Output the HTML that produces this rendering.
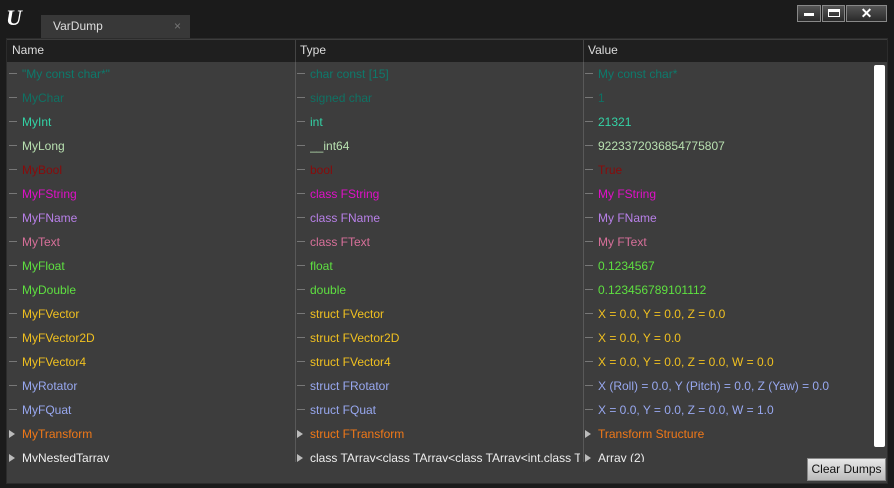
<!DOCTYPE html><html><head><style>
body{margin:0;width:894px;height:488px;background:#1b1b1b;overflow:hidden;font-family:"Liberation Sans",sans-serif;font-size:12px;position:relative}
.abs{position:absolute}
#panel{left:6px;top:38px;width:882px;height:446px;background:#3d3d3d;border:1px solid #2c2c2c;box-sizing:border-box;overflow:hidden}
#hdr{left:0;top:1px;width:882px;height:22px;background:#1f1f1f;color:#ddd}
#rows{position:absolute;left:0;top:0;width:882px;height:423px;overflow:hidden}
.row{position:absolute;left:0;height:24px;width:870px}
.c{position:absolute;top:0;line-height:24px;white-space:nowrap;overflow:hidden}
.t{position:absolute;top:11px;width:8px;height:1px;background:#777}
.ar{position:absolute;top:8px;width:0;height:0;border-left:6px solid #bbb;border-top:4px solid transparent;border-bottom:4px solid transparent}
.sep{position:absolute;top:23px;width:1px;height:400px;background:#595959}
.btn{position:absolute;top:5px;height:17px;background:linear-gradient(#555,#2a2a2a);border:1px solid #888;box-sizing:border-box;color:#fff;text-align:center;font-weight:bold;line-height:14px;font-size:14px}
</style></head><body>
<div class="abs" style="left:6px;top:5px;color:#fff;font:bold italic 22px 'Liberation Serif',serif">U</div>
<div class="abs" style="left:41px;top:15px;width:149px;height:24px;background:#383838;color:#ddd;line-height:22px"><span style="margin-left:12px">VarDump</span><span style="position:absolute;left:133px;color:#777">×</span></div>
<div class="btn" style="left:797px;width:24px"><div style="margin:7px auto;width:10px;height:3px;background:#fff"></div></div>
<div class="btn" style="left:822px;width:23px"><div style="margin:3px auto;width:12px;height:8px;border:1px solid #fff;border-top-width:3px;box-sizing:border-box"></div></div>
<div class="btn" style="left:846px;width:41px">✕</div>
<div id="panel" class="abs">
<div id="hdr" class="abs"><span class="abs" style="left:5px;top:3px">Name</span><span class="abs" style="left:293px;top:3px">Type</span><span class="abs" style="left:581px;top:3px">Value</span>
<div class="abs" style="left:288px;top:0;width:1px;height:22px;background:#444"></div><div class="abs" style="left:576px;top:0;width:1px;height:22px;background:#444"></div></div>
<div class="sep" style="left:288px"></div><div class="sep" style="left:576px"></div>
<div class="abs" style="left:867px;top:26px;width:11px;height:382px;background:#fff;border-radius:2px"></div>
<div id="rows"></div>
<div class="abs" style="left:800px;top:419px;width:79px;height:23px;background:linear-gradient(#e8e8e8,#bbb);border:1px solid #888;box-sizing:border-box;color:#111;text-align:center;line-height:21px">Clear Dumps</div>
</div>
<script>
var d=[["\"My const char*\"","char const [15]","My const char*","#0d7a6c"],["MyChar","signed char","1","#0f7264"],["MyInt","int","21321","#33d3a6"],["MyLong","__int64","9223372036854775807","#b8e0b0"],["MyBool","bool","True","#8a0a0a"],["MyFString","class FString","My FString","#e010c8"],["MyFName","class FName","My FName","#b880e8"],["MyText","class FText","My FText","#d8709a"],["MyFloat","float","0.1234567","#5ee040"],["MyDouble","double","0.123456789101112","#5ee040"],["MyFVector","struct FVector","X = 0.0, Y = 0.0, Z = 0.0","#f0c020"],["MyFVector2D","struct FVector2D","X = 0.0, Y = 0.0","#f0c020"],["MyFVector4","struct FVector4","X = 0.0, Y = 0.0, Z = 0.0, W = 0.0","#f0c020"],["MyRotator","struct FRotator","X (Roll) = 0.0, Y (Pitch) = 0.0, Z (Yaw) = 0.0","#98a8f0"],["MyFQuat","struct FQuat","X = 0.0, Y = 0.0, Z = 0.0, W = 1.0","#98a8f0"],["MyTransform","struct FTransform","Transform Structure","#f07818",1],["MyNestedTarray","class TArray<class TArray<class TArray<int,class TSizedDefaultAllocator<32> >","Array (2)","#eeeeee",1]];
var h="";d.forEach(function(r,i){var y=23+i*24;h+='<div class="row" style="top:'+y+'px;color:'+r[3]+'">';[0,288,576].forEach(function(x,j){h+=(r[4]?'<div class="ar" style="left:'+(x+2)+'px"></div>':'<div class="t" style="left:'+(x+2)+'px"></div>')+'<div class="c" style="left:'+(x+15)+'px;width:'+(j==1?270:260)+'px">'+r[j].replace(/</g,'&lt;')+'</div>'});h+='</div>'});
document.getElementById('rows').innerHTML=h;
</script>
</body></html>
